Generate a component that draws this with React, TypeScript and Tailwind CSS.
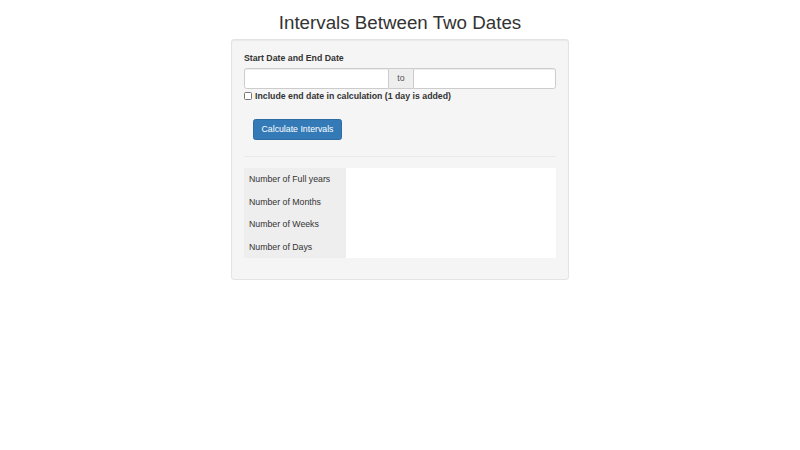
import React from "react";

export default function App() {
  const rows = ["Number of Full years", "Number of Months", "Number of Weeks", "Number of Days"];
  return (
    <div className="w-[800px] h-[450px] bg-white font-['Liberation_Sans',Arial,sans-serif] text-[#333] text-[8.75px] leading-[12.5px]">
      <h2 className="text-center text-[18.75px] leading-[20.6px] pt-[12.5px] mb-[6px] font-normal">
        Intervals Between Two Dates
      </h2>
      <div className="mx-auto w-[338px] bg-[#f5f5f5] border border-[#e3e3e3] rounded-[3px] shadow-[inset_0_1px_1px_rgba(0,0,0,0.05)] px-[12px] pt-[12px] pb-[12px]">
        <label className="block font-bold mb-[3px]">Start Date and End Date</label>
        <div className="flex h-[21px] w-[312px]">
          <div className="w-[145px] h-full bg-white border border-[#ccc] rounded-l-[2.5px] shadow-[inset_0_1px_1px_rgba(0,0,0,0.075)]" />
          <div className="w-[24px] h-full bg-[#eee] border-y border-[#ccc] flex items-center justify-center text-[#555]">
            to
          </div>
          <div className="flex-1 h-full bg-white border border-[#ccc] rounded-r-[2.5px] shadow-[inset_0_1px_1px_rgba(0,0,0,0.075)]" />
        </div>
        <div className="flex items-center h-[12.5px] mt-[1px] font-bold">
          <span className="inline-block w-[8px] h-[8px] border border-[#767676] rounded-[1.5px] bg-white mr-[3px] shrink-0" />
          <span>Include end date in calculation (1 day is added)</span>
        </div>
        <div className="mt-[16.5px] pl-[9px]">
          <button className="h-[21px] px-[7.5px] bg-[#337ab7] border border-[#2e6da4] rounded-[2.5px] text-white text-[8.75px] leading-[12.5px]">
            Calculate Intervals
          </button>
        </div>
        <div className="mt-[16px] border-t border-[#eaeaea] mb-[11px]" />
        <div className="flex w-[312px] mb-[9px]">
          <div className="w-[102px] bg-[#eeeeee]">
            {rows.map((r) => (
              <div key={r} className="h-[22.5px] flex items-center pl-[5px] pt-[1.5px]">
                {r}
              </div>
            ))}
          </div>
          <div className="flex-1 bg-white" />
        </div>
      </div>
    </div>
  );
}
